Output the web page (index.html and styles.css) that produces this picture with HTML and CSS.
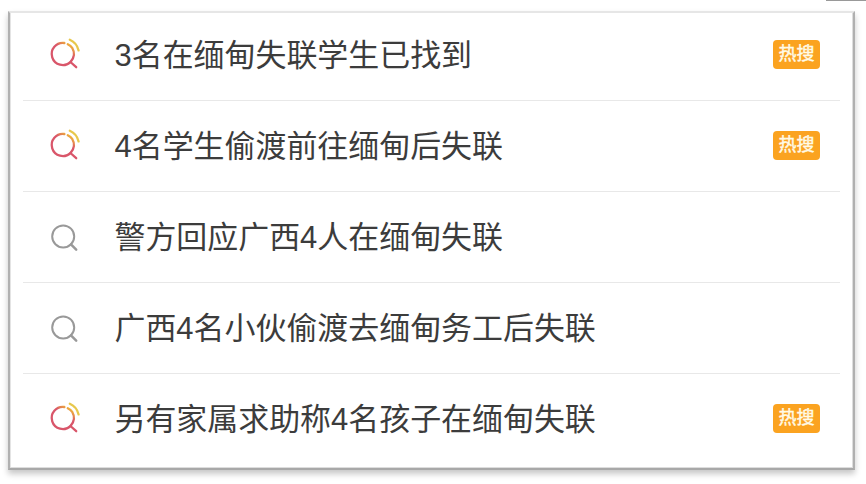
FILE: index.html
```html
<!DOCTYPE html>
<html lang="zh-CN">
<head>
<meta charset="utf-8">
<title>热搜</title>
<link rel="stylesheet" href="styles.css">
</head>
<body>
<svg class="defs" width="0" height="0" aria-hidden="true">
  <defs>
    <linearGradient id="ring" gradientUnits="userSpaceOnUse" x1="16" y1="20" x2="24" y2="9">
      <stop offset="0.4" stop-color="#d9566a"/>
      <stop offset="1" stop-color="#efb337"/>
    </linearGradient>
    <symbol id="hot" viewBox="0 0 34 34">
      <g fill="none" stroke-width="2.3" stroke-linecap="round">
        <path d="M16.4 6A11.1 11.1 0 1 0 22.4 25.1Q28.6 18.5 24.2 10.8Q22.8 8.6 19.8 7.2" stroke="url(#ring)"/>
        <path d="M22.4 25L28.2 30.2" stroke="#d9566a"/>
        <path d="M21.8 2.7Q28.8 5.7 30.6 13.4" stroke="#e7c84c"/>
      </g>
    </symbol>
    <symbol id="search" viewBox="0 0 34 34">
      <g fill="none" stroke="#999" stroke-width="2" stroke-linecap="round">
        <circle cx="15.2" cy="17.4" r="11"/>
        <path d="M23 25.4L28.2 30.6" stroke-width="2.5"/>
      </g>
    </symbol>
  </defs>
</svg>
<div class="edge"></div>
<main class="card">
  <ul class="list">
    <li class="row"><svg class="icon"><use href="#hot"/></svg><span class="text">3名在缅甸失联学生已找到</span><span class="tag">热搜</span></li>
    <li class="row"><svg class="icon"><use href="#hot"/></svg><span class="text">4名学生偷渡前往缅甸后失联</span><span class="tag">热搜</span></li>
    <li class="row"><svg class="icon"><use href="#search"/></svg><span class="text">警方回应广西4人在缅甸失联</span></li>
    <li class="row"><svg class="icon"><use href="#search"/></svg><span class="text">广西4名小伙偷渡去缅甸务工后失联</span></li>
    <li class="row"><svg class="icon"><use href="#hot"/></svg><span class="text">另有家属求助称4名孩子在缅甸失联</span><span class="tag">热搜</span></li>
  </ul>
</main>
</body>
</html>
```
FILE: styles.css
```css
* { box-sizing: border-box; }
body {
  margin: 0;
  height: 484px;
  padding: 11px 11px 0 8px;
  overflow: hidden;
  background: #fff;
  font-family: "Liberation Sans", "Noto Sans CJK SC", sans-serif;
}
.defs, .edge { position: absolute; }
.edge {
  top: 0;
  right: 0;
  width: 40px;
  height: 1px;
  background: #999;
}
.card {
  height: 459px;
  padding: 0 13px;
  background: #fff;
  border: 2px solid #b0b0b0;
  border-top-color: #e6e6e6;
  border-bottom-color: #a8a8a8;
  box-shadow: 0 4px 6px rgba(0, 0, 0, 0.22), inset -1px -1px 0 #ddd, inset 1px 0 0 #e4e4e4;
}
.list {
  margin: 0;
  padding: 0;
  list-style: none;
}
.row {
  display: flex;
  align-items: center;
  height: 91px;
  padding: 0 20px 2px 25px;
  border-bottom: 1px solid #e8e8e8;
}
.row:first-child { height: 88px; padding-bottom: 5px; }
.row:last-child { height: 90px; border-bottom: 0; }
.icon {
  flex: none;
  width: 34px;
  height: 34px;
}
.text {
  flex: 1;
  margin-left: 32.5px;
  padding-top: 4px;
  color: #3c3c3c;
  font-size: 30.95px;
  line-height: 44px;
  white-space: nowrap;
}
.tag {
  width: 47px;
  height: 29px;
  border-radius: 4px;
  background: #fba320;
  color: #fffbe8;
  font-size: 18px;
  line-height: 28px;
  text-align: center;
  -webkit-text-stroke: 0.4px #fffbe8;
}
```
